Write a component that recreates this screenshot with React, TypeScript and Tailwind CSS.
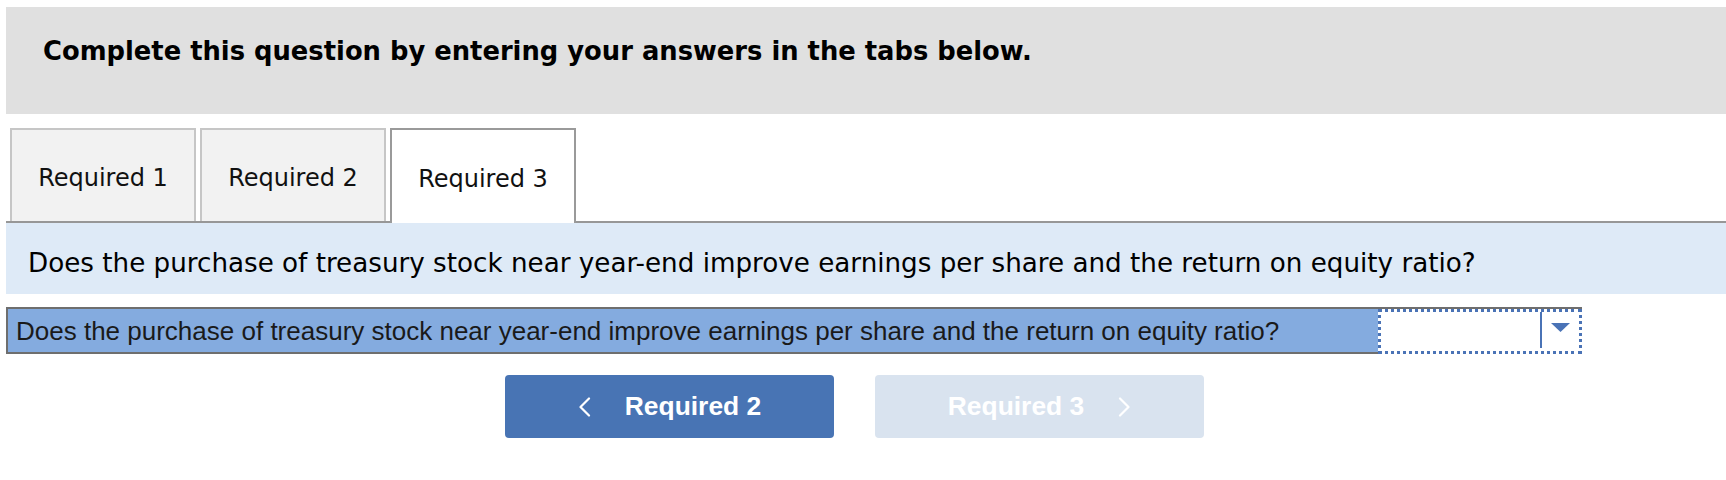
import React from 'react';

const verdana = { fontFamily: '"DejaVu Sans", Verdana, sans-serif' };
const arial = { fontFamily: '"Liberation Sans", Arial, sans-serif' };

const question =
  'Does the purchase of treasury stock near year-end improve earnings per share and the return on equity ratio?';

function Chevron({ dir }: { dir: 'left' | 'right' }) {
  const pts = dir === 'left' ? '11,1.5 2.5,10 11,18.5' : '2,1.5 10.5,10 2,18.5';
  return (
    <svg width="13" height="20" viewBox="0 0 13 20" fill="none">
      <polyline points={pts} stroke="white" strokeWidth="2.2" strokeLinecap="round" strokeLinejoin="round" />
    </svg>
  );
}

export default function App() {
  const tabs = ['Required 1', 'Required 2', 'Required 3'];
  const active = 2;

  return (
    <div className="w-[1726px] h-[480px] overflow-hidden bg-white pl-[6px] pt-[7px]">
      {/* Instructions header */}
      <div className="h-[107px] bg-[#e0e0e0] pl-[37px] pt-[29px]">
        <h2 className="text-[25.8px] leading-[30px] font-bold text-black" style={verdana}>
          Complete this question by entering your answers in the tabs below.
        </h2>
      </div>

      {/* Tabs */}
      <div className="mt-[14px] flex items-end gap-[4px] border-b-2 border-[#979797] pl-[4px]">
        {tabs.map((t, i) =>
          i === active ? (
            <div
              key={t}
              className="w-[186px] h-[95px] -mb-[2px] flex items-center justify-center pt-[4px] border-2 border-b-0 border-[#9a9a9a] bg-white text-[24px] text-[#111]"
              style={verdana}
            >
              {t}
            </div>
          ) : (
            <div
              key={t}
              className="w-[186px] h-[93px] flex items-center justify-center pt-[4px] border-2 border-b-0 border-[#c6c6c6] bg-[#f2f2f2] text-[24px] text-[#111]"
              style={verdana}
            >
              {t}
            </div>
          )
        )}
      </div>

      {/* Question band */}
      <div className="h-[71px] bg-[#deeaf7] pl-[22px] pt-[25px] text-[26.2px] leading-[30px] text-black whitespace-nowrap" style={verdana}>
        {question}
      </div>

      {/* Answer row */}
      <div className="mt-[13px] flex h-[47px] w-[1576px] border-t-2 border-[#6e6e6e]">
        <div
          className="w-[1372px] flex items-center border-l-2 border-b-2 border-[#6e6e6e] bg-[#84abdf] pl-[8px] text-[26px] leading-[30px] text-[#1a1a1a] whitespace-nowrap"
          style={arial}
        >
          {question}
        </div>
        <div className="flex flex-1 items-start border-[3px] border-dotted border-[#4a73b6] bg-white">
          <div className="flex-1" />
          <div className="w-[2px] h-[36px] bg-[#4a73b6]" />
          <div className="w-[37px] flex justify-center pt-[11px]">
            <svg width="19" height="9" viewBox="0 0 19 9">
              <polygon points="0,0 19,0 9.5,9" fill="#4a73b6" />
            </svg>
          </div>
        </div>
      </div>

      {/* Navigation buttons */}
      <div className="mt-[21px] flex justify-center gap-[41px] pr-[23px]" style={arial}>
        <button className="w-[329px] h-[63px] rounded-[4px] bg-[#4874b4] flex items-center justify-center gap-[34px] text-white font-bold text-[26.4px]">
          <Chevron dir="left" />
          <span>Required 2</span>
        </button>
        <button className="w-[329px] h-[63px] rounded-[4px] bg-[#d9e3ef] flex items-center justify-center gap-[34px] text-white font-bold text-[26.4px]">
          <span>Required 3</span>
          <Chevron dir="right" />
        </button>
      </div>
    </div>
  );
}
